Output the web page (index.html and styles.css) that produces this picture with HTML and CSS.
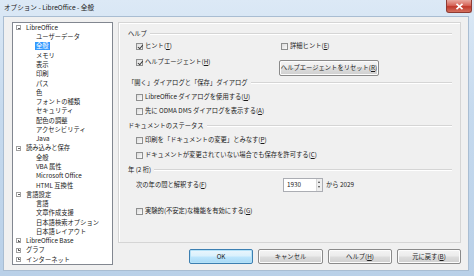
FILE: index.html
```html
<!DOCTYPE html>
<html lang="ja">
<head>
<meta charset="utf-8">
<title>オプション - LibreOffice - 全般</title>
<link rel="stylesheet" href="styles.css">
</head>
<body>
<div class="window">
  <div class="titlebar">
    <span class="title">オプション - LibreOffice - 全般</span>
    <div class="close"><svg width="9" height="7" viewBox="0 0 9 7"><path d="M1.5 0.8 L7.5 6.2 M7.5 0.8 L1.5 6.2" stroke="#fff" stroke-width="1.6" fill="none"/></svg></div>
  </div>
  <div class="client">
    <div class="tree">
      <div class="node top"><span class="exp minus"></span>LibreOffice</div>
      <div class="node child">ユーザーデータ</div>
      <div class="node child"><span class="sel">全般</span></div>
      <div class="node child">メモリ</div>
      <div class="node child">表示</div>
      <div class="node child">印刷</div>
      <div class="node child">パス</div>
      <div class="node child">色</div>
      <div class="node child">フォントの種類</div>
      <div class="node child">セキュリティ</div>
      <div class="node child">配色の調整</div>
      <div class="node child">アクセシビリティ</div>
      <div class="node child">Java</div>
      <div class="node top"><span class="exp minus"></span>読み込みと保存</div>
      <div class="node child">全般</div>
      <div class="node child">VBA 属性</div>
      <div class="node child">Microsoft Office</div>
      <div class="node child">HTML 互換性</div>
      <div class="node top"><span class="exp minus"></span>言語設定</div>
      <div class="node child">言語</div>
      <div class="node child">文章作成支援</div>
      <div class="node child">日本語検索オプション</div>
      <div class="node child">日本語レイアウト</div>
      <div class="node top"><span class="exp plus"></span>LibreOffice Base</div>
      <div class="node top"><span class="exp plus"></span>グラフ</div>
      <div class="node top"><span class="exp plus"></span>インターネット</div>
    </div>
    <div class="right">
      <div class="panel">
        <div class="hdr"><span>ヘルプ</span><span class="rule"></span></div>
        <div class="row r1">
          <div class="cell1"><span class="cb on"></span>ヒント(<u>T</u>)</div>
          <div class="cell2"><span class="cb"></span>詳細ヒント(<u>E</u>)</div>
        </div>
        <div class="row r2">
          <div class="cell1"><span class="cb on"></span>ヘルプエージェント(<u>H</u>)</div>
          <div class="btn reset">ヘルプエージェントをリセット(<u>R</u>)</div>
        </div>
        <div class="hdr h2"><span>「開く」ダイアログと「保存」ダイアログ</span><span class="rule"></span></div>
        <div class="row m2"><span class="cb"></span>LibreOffice ダイアログを使用する(<u>U</u>)</div>
        <div class="row m2"><span class="cb"></span>先に ODMA DMS ダイアログを表示する(<u>A</u>)</div>
        <div class="hdr m3"><span>ドキュメントのステータス</span><span class="rule"></span></div>
        <div class="row m2"><span class="cb"></span>印刷を「ドキュメントの変更」とみなす(<u>P</u>)</div>
        <div class="row m3"><span class="cb"></span>ドキュメントが変更されていない場合でも保存を許可する(<u>C</u>)</div>
        <div class="hdr m3"><span>年 (2 桁)</span><span class="rule"></span></div>
        <div class="row rf">
          <span class="flabel">次の年の間と解釈する(<u>F</u>)</span>
          <div class="spin"><span class="val">1930</span><span class="arrows"><span class="up"></span><span class="dn"></span></span></div>
          <span class="to">から 2029</span>
        </div>
        <div class="row rg"><span class="cb"></span>実験的(不安定)な機能を有効にする(<u>G</u>)</div>
      </div>
      <div class="buttons">
        <div class="btn ok">OK</div>
        <div class="btn w65">キャンセル</div>
        <div class="btn">ヘルプ(<u>H</u>)</div>
        <div class="btn">元に戻す(<u>B</u>)</div>
      </div>
    </div>
  </div>
</div>
</body>
</html>
```

FILE: styles.css
```css
* { box-sizing: border-box; }
html, body { margin: 0; padding: 0; }
body {
  width: 474px;
  height: 276px;
  overflow: hidden;
  font-family: "Noto Sans CJK JP", "Noto Sans", sans-serif;
  font-size: 6.3px;
  color: #1a1a1a;
}
.window {
  width: 474px;
  height: 276px;
  display: flex;
  flex-direction: column;
  background: linear-gradient(180deg, #dce9f6 0%, #c6daee 40%, #b9d0e8 100%);
}
.titlebar {
  height: 16px;
  display: flex;
  align-items: flex-start;
  padding-left: 4px;
}
.title {
  margin-top: 3px;
  font-size: 6.6px;
  line-height: 8px;
  color: #1a1a1a;
}
.close {
  margin-left: auto;
  margin-right: 2px;
  width: 26px;
  height: 13px;
  border: 1px solid #8e3b33;
  border-top: none;
  border-radius: 0 0 3px 3px;
  background: linear-gradient(180deg, #e8a89f 0%, #d7665a 45%, #c0392b 55%, #d4705f 100%);
  display: flex;
  align-items: center;
  justify-content: center;
}
.client {
  flex: 1;
  margin: 0 5px 5px 3px;
  background: #f0f0f0;
  border: 1px solid #a9bdd2;
  display: flex;
  padding: 5px 0 0 8px;
  gap: 5px;
}
.tree {
  width: 101px;
  height: 243px;
  background: #fff;
  border: 1px solid #828790;
  overflow: hidden;
}
.node {
  height: 9.27px;
  line-height: 9.27px;
  white-space: nowrap;
  display: flex;
  align-items: center;
}
.node.top { padding-left: 3px; }
.node.child { padding-left: 23px; }
.exp {
  width: 5px;
  height: 5px;
  border: 1px solid #a0a0a0;
  margin-right: 5px;
  position: relative;
  flex: none;
}
.exp::before {
  content: "";
  position: absolute;
  left: 0.5px;
  top: 1.5px;
  width: 2px;
  height: 0;
  border-top: 1px solid #606060;
}
.exp.plus::after {
  content: "";
  position: absolute;
  left: 1px;
  top: 0.5px;
  width: 0;
  height: 2px;
  border-left: 1px solid #606060;
}
.sel {
  background: #3399ff;
  color: #fff;
  padding: 0 1px;
  margin-left: -1px;
  line-height: 8px;
}
.right {
  width: 343px;
  display: flex;
  flex-direction: column;
}
.panel {
  height: 221px;
  border: 1px solid #d5d5d5;
  background: #f0f0f0;
  padding: 5px 0 0 9px;
  display: flex;
  flex-direction: column;
  box-shadow: inset 1px 1px 0 #fff;
}
.hdr {
  height: 12px;
  line-height: 12px;
  display: flex;
  align-items: center;
  white-space: nowrap;
}
.rule {
  flex: 1;
  margin-left: 3px;
  margin-right: 8px;
  height: 2px;
  border-top: 1px solid #d5d5d5;
  border-bottom: 1px solid #fff;
}
.h2 { margin-top: 1px; }
.m2 { margin-top: 2px; }
.m3 { margin-top: 3px; }
.row {
  height: 12px;
  line-height: 12px;
  display: flex;
  align-items: center;
  padding-left: 8px;
  white-space: nowrap;
}
.row u, .btn u { text-decoration: underline; }
.r2 {
  height: 20px;
  margin-top: 4px;
  align-items: flex-start;
}
.cell1 {
  width: 145px;
  height: 12px;
  display: flex;
  align-items: center;
}
.cell2 {
  display: flex;
  align-items: center;
}
.cb {
  width: 7px;
  height: 7px;
  border: 1px solid #8e8f8f;
  background: linear-gradient(135deg, #dcdcdc, #fbfbfb);
  margin-right: 2px;
  flex: none;
  position: relative;
}
.cb.on::after {
  content: "";
  position: absolute;
  left: 1.5px;
  top: 0px;
  width: 2px;
  height: 3.5px;
  border-right: 1px solid #3b3b3b;
  border-bottom: 1px solid #3b3b3b;
  transform: rotate(40deg);
}
.btn {
  width: 64px;
  height: 15px;
  border: 1px solid #8a8a8a;
  border-radius: 2px;
  background: linear-gradient(180deg, #f4f4f4 0%, #ebebeb 48%, #dddddd 52%, #cfcfcf 100%);
  box-shadow: inset 0 0 0 1px #fcfcfc;
  display: flex;
  align-items: center;
  justify-content: center;
  white-space: nowrap;
}
.btn.reset {
  width: 100px;
  height: 16px;
  margin-top: 4px;
  margin-left: -2px;
}
.btn.ok {
  border-color: #3c7fb1;
  box-shadow: inset 0 0 0 1px #b5e2f8;
  background: linear-gradient(180deg, #eaf6fd 0%, #d9f0fc 48%, #bee6fd 52%, #a7d9f5 100%);
}
.btn.w65 { width: 65px; }
.buttons {
  margin-top: 6px;
  display: flex;
  justify-content: flex-end;
  gap: 5px;
}
.rf {
  height: 14px;
  margin-top: 2px;
}
.flabel { width: 147px; }
.spin {
  width: 40px;
  height: 14px;
  border: 1px solid #abadb3;
  background: #fff;
  display: flex;
  align-items: center;
  padding-left: 3px;
}
.val { flex: 1; }
.arrows {
  width: 6px;
  height: 12px;
  display: flex;
  flex-direction: column;
  border-left: 1px solid #d8d8d8;
}
.up, .dn {
  flex: 1;
  background: #eeeeee;
  position: relative;
}
.up::after, .dn::after {
  content: "";
  position: absolute;
  left: 1px;
  width: 0;
  height: 0;
  border-left: 1.5px solid transparent;
  border-right: 1.5px solid transparent;
}
.up::after { top: 2px; border-bottom: 2px solid #444; }
.dn::after { top: 1px; border-top: 2px solid #444; }
.to { margin-left: 3px; }
.rg { margin-top: 13px; }
```
